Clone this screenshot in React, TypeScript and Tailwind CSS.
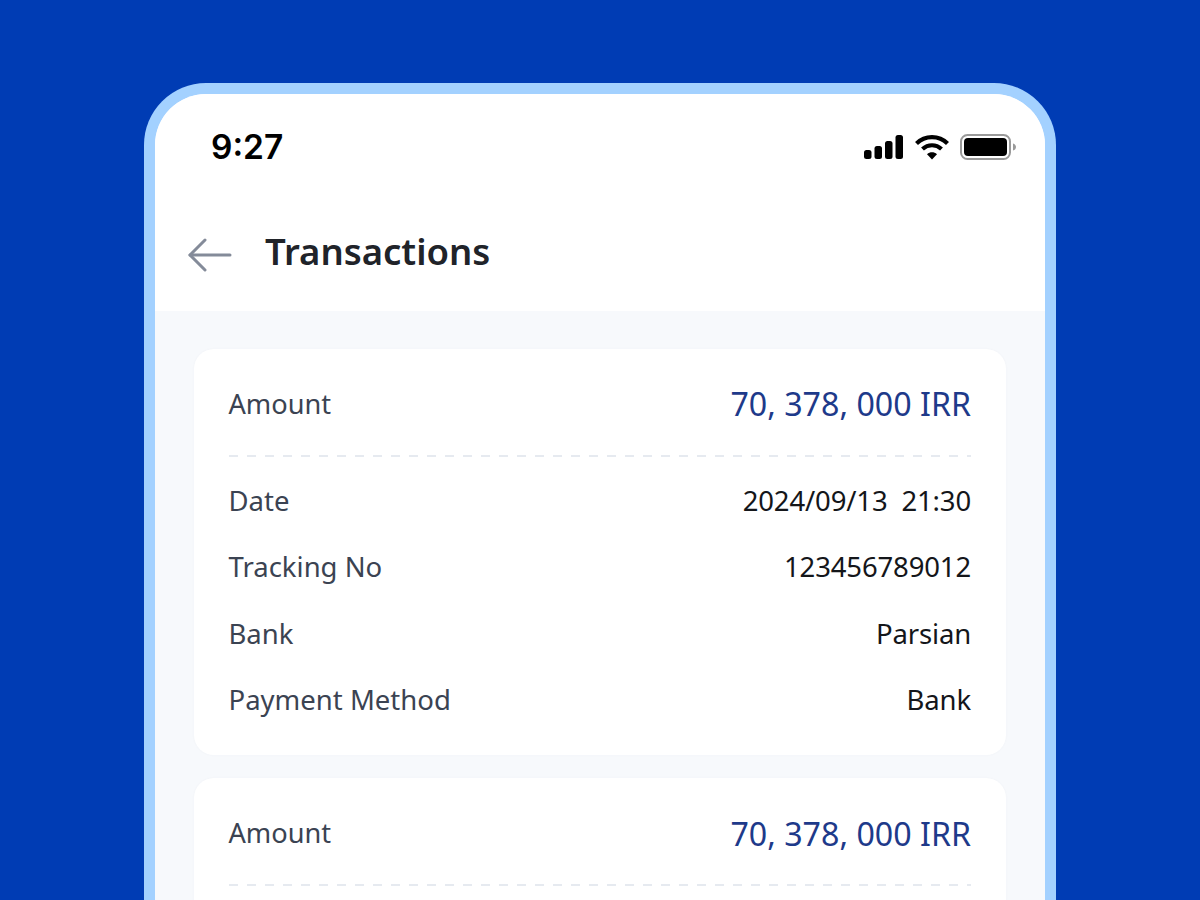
// Pantalla de transacciones dentro del marco del teléfono.
const rows = [
  { label: 'Date', value: '2024/09/13\u00a0\u00a021:30' },
  { label: 'Tracking No', value: '123456789012' },
  { label: 'Bank', value: 'Parsian' },
  { label: 'Payment Method', value: 'Bank' },
];

function StatusIcons() {
  return (
    <div className="flex items-center gap-[10px]">
      <svg width="40" height="25" viewBox="0 0 40 25" fill="#000">
        <rect x="0" y="15" width="7.5" height="9" rx="2.5" />
        <rect x="10.5" y="11" width="7.5" height="13" rx="2.5" />
        <rect x="21" y="6" width="7.5" height="18" rx="2.5" />
        <rect x="31.5" y="0" width="7.5" height="24" rx="2.5" />
      </svg>
      <svg width="36" height="26" viewBox="0 0 36 26" fill="none" stroke="#000" strokeWidth="4.2">
        <path d="M2.5 9.5C11 1 25 1 33.5 9.5" />
        <path d="M8.5 15C14 10 22 10 27.5 15" />
        <path d="M13 20.2L18 25.5L23 20.2C20 17.6 16 17.6 13 20.2Z" fill="#000" stroke="none" />
      </svg>
      <svg width="57" height="26" viewBox="0 0 57 26" fill="none">
        <rect x="1" y="1" width="49" height="24" rx="6.5" stroke="#9a9a9a" strokeWidth="2" />
        <rect x="4" y="4" width="43" height="18" rx="4" fill="#000" />
        <path d="M53 9.5C55 10 56 11.5 56 13C56 14.5 55 16 53 16.5Z" fill="#9a9a9a" />
      </svg>
    </div>
  );
}

function TransactionCard({ details = false }: { details?: boolean }) {
  return (
    <div className="rounded-[20px] bg-white pr-[35px] pl-[34.5px] shadow-[0_0_3px_rgba(30,50,90,0.03)]">
      <div className="flex h-[106px] items-center justify-between pt-[3px]">
        <span className="pt-[2px] text-[27.2px] text-[#3b4352]">Amount</span>
        <span className="pt-[2px] text-[32.2px] text-[#1e3a8a]">70, 378, 000 IRR</span>
      </div>
      <div className="h-[2px] bg-[repeating-linear-gradient(90deg,#e6eaf0_0,#e6eaf0_9px,transparent_9px,transparent_18px)]" />
      {details ? (
        <div className="flex flex-col pt-[10.5px] pb-[22.5px]">
          {rows.map((row) => (
            <div key={row.label} className="flex h-[66.3px] items-center justify-between">
              <span className="text-[27.5px] text-[#3b4352]">{row.label}</span>
              <span className="text-[27.5px] tracking-[-0.15px] text-[#14161a]">{row.value}</span>
            </div>
          ))}
        </div>
      ) : (
        <div className="h-[100px]" />
      )}
    </div>
  );
}

export default function App() {
  return (
    <div className="h-[900px] overflow-hidden bg-[#003cb4] pt-[83px] font-['Noto_Sans',sans-serif]">
      <div className="mx-auto h-[1000px] w-[912px] rounded-t-[62px] bg-[#a3d1ff] px-[11px] pt-[11px]">
        <div className="h-full overflow-hidden rounded-t-[51px] bg-[#f7f9fc]">
          <div className="h-[217px] bg-white">
            <div className="flex h-[104px] items-center justify-between pt-[2px] pr-[28px] pl-[56px]">
              <span className="font-['Inter',sans-serif] text-[33.5px] font-semibold text-black">9:27</span>
              <StatusIcons />
            </div>
            <div className="flex items-center gap-[33px] pt-[26px] pl-[33px]">
              <svg className="mt-[8px]" width="44" height="36" viewBox="0 0 44 36" fill="none" stroke="#848b99" strokeWidth="3" strokeLinecap="round" strokeLinejoin="round">
                <path d="M2 18H42" />
                <path d="M17 3L2 18L17 33" />
              </svg>
              <h1 className="text-[36.5px] font-semibold text-[#202329]">Transactions</h1>
            </div>
          </div>
          <div className="flex flex-col gap-[23px] px-[39px] pt-[38px]">
            <TransactionCard details />
            <TransactionCard />
          </div>
        </div>
      </div>
    </div>
  );
}
